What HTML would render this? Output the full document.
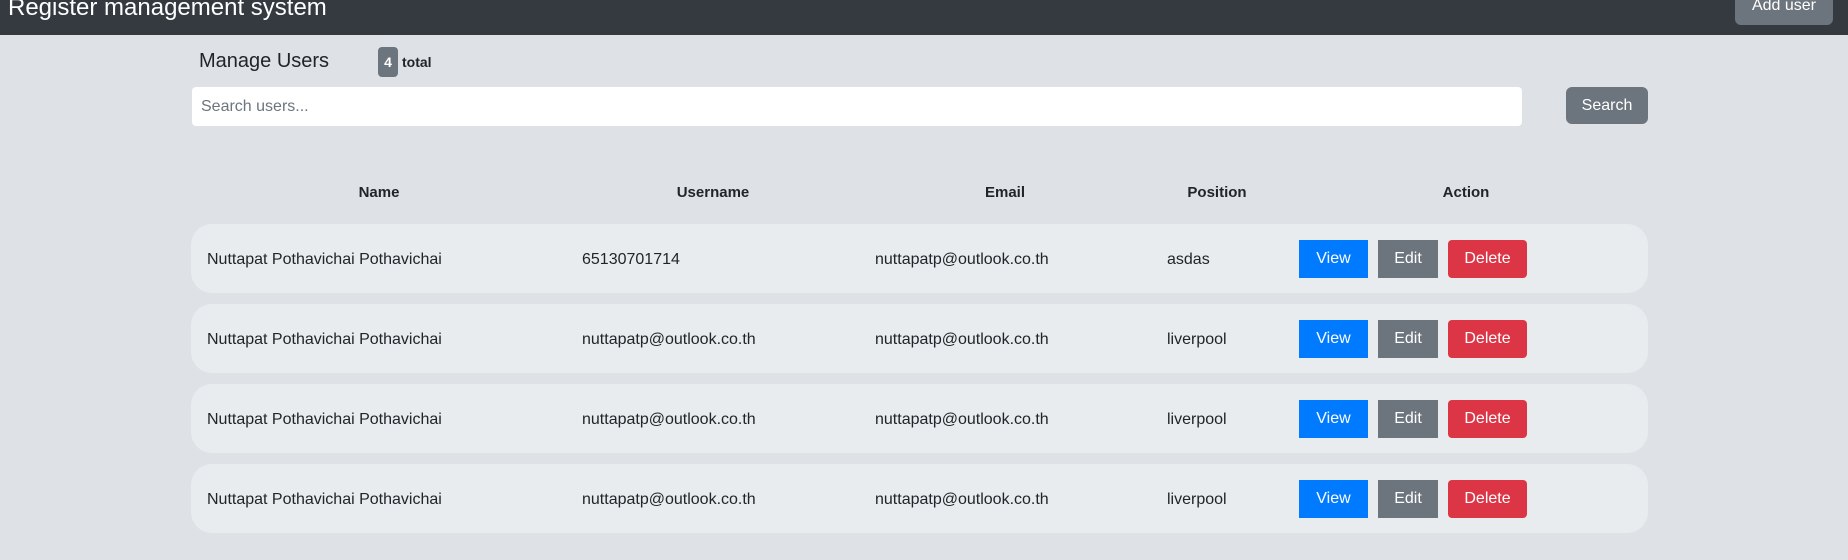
<!DOCTYPE html>
<html><head><style>
*{box-sizing:border-box;margin:0;padding:0}
body{width:1848px;height:560px;background:#dee2e6;font-family:"Liberation Sans",sans-serif;position:relative;overflow:hidden;color:#212529}
.hdr{position:absolute;left:0;top:0;width:1848px;height:35px;background:#343a40}
.title{position:absolute;left:8px;top:-7px;color:#fff;font-size:24px;line-height:30px}
.add{position:absolute;left:1735px;top:-10px;width:98px;height:35px;background:#6c757d;border-radius:6px;color:#fff;font-size:16px;text-align:center;line-height:56px;overflow:hidden}
.add span{position:relative;top:-12px}
.mu{position:absolute;left:199px;top:50px;font-size:20px}
.badge{position:absolute;left:378px;top:47px;width:20px;height:30px;background:#6c757d;border-radius:4px;color:#fff;font-weight:bold;font-size:14px;text-align:center;line-height:30px}
.total{position:absolute;left:402px;top:54px;font-size:14px;font-weight:bold}
.inp{position:absolute;left:192px;top:87px;width:1330px;height:39px;background:#fff;border-radius:4px;color:#6c757d;font-size:16px;line-height:39px;padding-left:9px}
.sb{position:absolute;left:1566px;top:87px;width:82px;height:37px;background:#6c757d;border-radius:6px;color:#fff;font-size:16px;text-align:center;line-height:37px}
.th{position:absolute;top:184px;font-size:15px;font-weight:bold;transform:translateX(-50%)}
.row{position:absolute;left:191px;width:1457px;height:69px;background:#e9ecef;border-radius:21px}
.c{position:absolute;top:27px;font-size:16px}
.b{position:absolute;top:16px;height:38px;color:#fff;font-size:16px;text-align:center;line-height:38px}
</style></head><body>
<div class="hdr"><div class="title">Register management system</div><div class="add"><span>Add user</span></div></div>
<div class="mu">Manage Users</div>
<div class="badge">4</div><div class="total">total</div>
<div class="inp">Search users...</div>
<div class="sb">Search</div>
<div class="th" style="left:379px">Name</div>
<div class="th" style="left:713px">Username</div>
<div class="th" style="left:1005px">Email</div>
<div class="th" style="left:1217px">Position</div>
<div class="th" style="left:1466px">Action</div>

<div class="row" style="top:224px"><div class="c" style="left:16px">Nuttapat Pothavichai Pothavichai</div><div class="c" style="left:391px">65130701714</div><div class="c" style="left:684px">nuttapatp@outlook.co.th</div><div class="c" style="left:976px">asdas</div>
<div class="b" style="left:1108px;width:69px;background:#007bff">View</div><div class="b" style="left:1187px;width:60px;background:#6c757d">Edit</div><div class="b" style="left:1257px;width:79px;background:#dc3545;border-radius:4px">Delete</div></div>

<div class="row" style="top:304px"><div class="c" style="left:16px">Nuttapat Pothavichai Pothavichai</div><div class="c" style="left:391px">nuttapatp@outlook.co.th</div><div class="c" style="left:684px">nuttapatp@outlook.co.th</div><div class="c" style="left:976px">liverpool</div>
<div class="b" style="left:1108px;width:69px;background:#007bff">View</div><div class="b" style="left:1187px;width:60px;background:#6c757d">Edit</div><div class="b" style="left:1257px;width:79px;background:#dc3545;border-radius:4px">Delete</div></div>

<div class="row" style="top:384px"><div class="c" style="left:16px">Nuttapat Pothavichai Pothavichai</div><div class="c" style="left:391px">nuttapatp@outlook.co.th</div><div class="c" style="left:684px">nuttapatp@outlook.co.th</div><div class="c" style="left:976px">liverpool</div>
<div class="b" style="left:1108px;width:69px;background:#007bff">View</div><div class="b" style="left:1187px;width:60px;background:#6c757d">Edit</div><div class="b" style="left:1257px;width:79px;background:#dc3545;border-radius:4px">Delete</div></div>

<div class="row" style="top:464px"><div class="c" style="left:16px">Nuttapat Pothavichai Pothavichai</div><div class="c" style="left:391px">nuttapatp@outlook.co.th</div><div class="c" style="left:684px">nuttapatp@outlook.co.th</div><div class="c" style="left:976px">liverpool</div>
<div class="b" style="left:1108px;width:69px;background:#007bff">View</div><div class="b" style="left:1187px;width:60px;background:#6c757d">Edit</div><div class="b" style="left:1257px;width:79px;background:#dc3545;border-radius:4px">Delete</div></div>
</body></html>
